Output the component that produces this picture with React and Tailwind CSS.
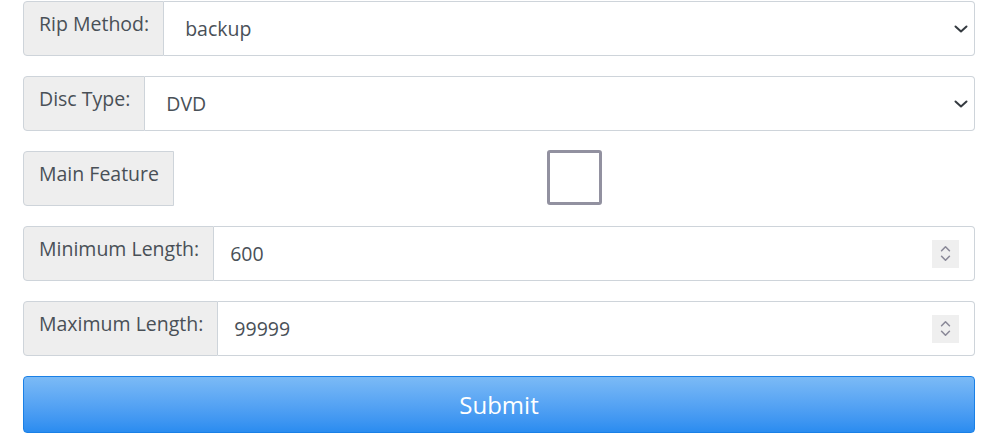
import { useState } from "react"

const font = { fontFamily: '"Open Sans", "Noto Sans", sans-serif' }

const Label = ({ children }) => (
    <div className="flex-none self-stretch pl-[15px] pr-[14px] pt-[7px] bg-[#eeeeee] border border-[#ced4da] rounded-l-[4px] text-[19.5px] leading-[29px] text-[#495057] whitespace-nowrap">
        {children}
    </div>
)

const Chevron = ({ up = false }) => (
    <svg viewBox="0 0 12 8" className="w-[11px] h-[7px]" fill="none" stroke="#8a8998" strokeWidth="1.8" strokeLinecap="round" strokeLinejoin="round">
        <path d={up ? "M1.5 6.5 6 2l4.5 4.5" : "M1.5 1.5 6 6l4.5-4.5"} />
    </svg>
)

const SelectRow = ({ label, value, options, onChange }) => (
    <div className="flex h-[55px] mb-[20px]">
        <Label>{label}</Label>
        <div className="relative flex-1 border border-l-0 border-[#ced4da] rounded-r-[4px] bg-white">
            <select
                value={value}
                onChange={(e) => onChange(e.target.value)}
                className="w-full h-full appearance-none bg-transparent pl-[21px] pr-10 text-[19.5px] text-[#495057] outline-none"
                style={font}
            >
                {options.map((o) => (
                    <option key={o} value={o}>{o}</option>
                ))}
            </select>
            {/* chevron over the native select */}
            <svg viewBox="0 0 16 16" className="pointer-events-none absolute right-[5px] top-1/2 -translate-y-1/2 w-4 h-4" fill="none" stroke="#343a40" strokeWidth="2" strokeLinecap="round" strokeLinejoin="round">
                <path d="M2.5 5.5 8 10.5l5.5-5" />
            </svg>
        </div>
    </div>
)

const NumberRow = ({ label, value, onChange }) => (
    <div className="flex h-[55px] mb-[20px]">
        <Label>{label}</Label>
        <div className="flex flex-1 items-center border border-l-0 border-[#ced4da] rounded-r-[4px] bg-white pr-[15px]">
            <input
                type="number"
                value={value}
                onChange={(e) => onChange(e.target.value)}
                className="flex-1 min-w-0 h-full bg-transparent pl-[16px] text-[19.5px] text-[#495057] outline-none [appearance:textfield] [&::-webkit-inner-spin-button]:appearance-none [&::-webkit-outer-spin-button]:appearance-none"
                style={font}
            />
            <div className="flex flex-col items-center justify-center gap-[3px] w-[27px] h-[28px] bg-[#efefef]">
                <Chevron up />
                <Chevron />
            </div>
        </div>
    </div>
)

export default function App() {
    const [method, setMethod] = useState("backup")
    const [disc, setDisc] = useState("DVD")
    const [mainFeature, setMainFeature] = useState(false)
    const [minLen, setMinLen] = useState("600")
    const [maxLen, setMaxLen] = useState("99999")

    return (
        <div className="bg-white pl-[23px] pr-[22px] pt-[1px]" style={font}>
            <SelectRow label="Rip Method:" value={method} options={["backup", "mkv"]} onChange={setMethod} />
            <SelectRow label="Disc Type:" value={disc} options={["DVD", "Blu-ray", "Data"]} onChange={setDisc} />

            {/* Main feature toggle */}
            <div className="flex h-[55px] mb-[20px]">
                <div className="flex-none self-stretch pl-[15px] pr-[14px] pt-[7px] bg-[#eeeeee] border border-[#ced4da] rounded-l-[4px] text-[19.5px] leading-[29px] text-[#495057]">
                    Main Feature
                </div>
                <div className="flex flex-1 justify-center">
                    <button
                        type="button"
                        onClick={() => setMainFeature(!mainFeature)}
                        className="-mt-[1px] w-[55px] h-[55px] border-[3px] border-[#9291a0] rounded-[3px] bg-white flex items-center justify-center"
                    >
                        {mainFeature && (
                            <svg viewBox="0 0 24 24" className="w-8 h-8" fill="none" stroke="#2a8cf0" strokeWidth="3">
                                <path d="M4 12l5 5L20 6" />
                            </svg>
                        )}
                    </button>
                </div>
            </div>

            <NumberRow label="Minimum Length:" value={minLen} onChange={setMinLen} />
            <NumberRow label="Maximum Length:" value={maxLen} onChange={setMaxLen} />

            <button
                type="submit"
                className="w-full h-[57px] border border-[#1a80e6] rounded-[4px] bg-gradient-to-b from-[#7bbaf6] to-[#2a8cf0] text-white text-[24px]"
                style={font}
            >
                Submit
            </button>
        </div>
    )
}
